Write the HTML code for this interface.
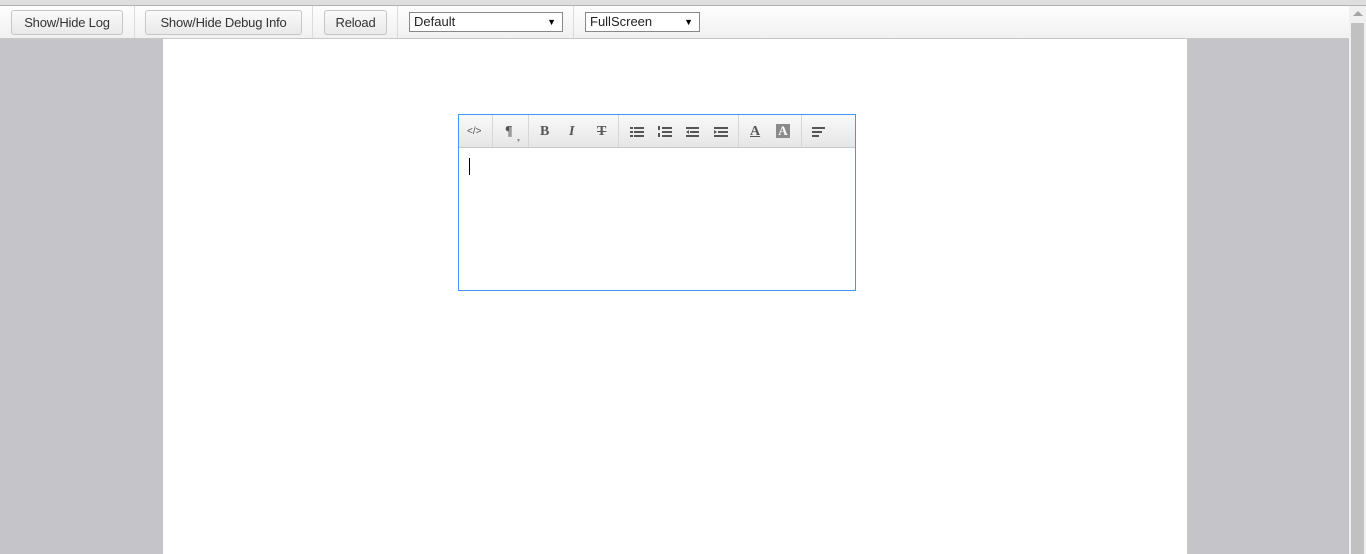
<!DOCTYPE html>
<html><head><meta charset="utf-8"><style>
*{margin:0;padding:0;box-sizing:border-box}
body{width:1366px;height:554px;overflow:hidden;background:#c5c4c8;position:relative;font-family:"Liberation Sans",sans-serif}
.a{position:absolute}
.top{left:0;top:0;width:1366px;height:6px;background:#dedede;border-bottom:1px solid #b0b0b0}
.tb{left:0;top:6px;width:1349px;height:33px;background:linear-gradient(#fdfdfd,#f1f1f1);border-bottom:1px solid #c8c8c8}
.btn{top:10px;height:25px;border:1px solid #c6c6c6;border-radius:3px;background:linear-gradient(#fafafa,#e9e9e9);font-size:13px;color:#333;text-align:center;line-height:23px;letter-spacing:-0.2px}
.sep{top:6px;width:1px;height:32px;background:#dcdcdc}
.sel{top:12px;height:20px;border:1px solid #888;background:#fff;font-size:13px;color:#222;line-height:18px;padding-left:4px}
.sel span{position:absolute;right:6px;top:0;font-size:9px;color:#000}
.sb{left:1349px;top:6px;width:17px;height:548px;background:#f0f0f0}
.thumb{left:1351px;top:23px;width:13px;height:531px;background:#c1c1c1}
.page{left:163px;top:39px;width:1024px;height:515px;background:#fff}
.ed{left:458px;top:114px;width:398px;height:177px;border:1px solid #3b99fc;background:#fff}
.et{left:459px;top:115px;width:396px;height:33px;background:linear-gradient(#f9f9f9,#e6e6e6);border-bottom:1px solid #c9c9c9}
.es{top:115px;width:1px;height:32px;background:#d6d6d6}
.ic{top:124px;font-family:"Liberation Serif",serif;font-weight:bold;font-size:14px;color:#555}
</style></head><body>
<div class="a top"></div>
<div class="a tb"></div>
<div class="a btn" style="left:11px;width:112px">Show/Hide Log</div>
<div class="a sep" style="left:134px"></div>
<div class="a btn" style="left:145px;width:157px">Show/Hide Debug Info</div>
<div class="a sep" style="left:312px"></div>
<div class="a btn" style="left:324px;width:63px">Reload</div>
<div class="a sep" style="left:397px"></div>
<div class="a sel" style="left:409px;width:154px">Default<span>▼</span></div>
<div class="a sep" style="left:573px"></div>
<div class="a sel" style="left:585px;width:115px">FullScreen<span>▼</span></div>
<div class="a sb"></div>
<div class="a" style="left:1353px;top:11px;width:0;height:0;border-left:5px solid transparent;border-right:5px solid transparent;border-bottom:5px solid #a3a3a3"></div>
<div class="a thumb"></div>
<div class="a page"></div>
<div class="a ed"></div>
<div class="a et"></div>
<div class="a es" style="left:492px"></div>
<div class="a es" style="left:528px"></div>
<div class="a es" style="left:618px"></div>
<div class="a es" style="left:738px"></div>
<div class="a es" style="left:801px"></div>
<div class="a" style="left:467px;top:126px;font-size:10px;color:#555">&lt;/&gt;</div>
<div class="a ic" style="left:505px">¶</div>
<div class="a" style="left:516px;top:138px;font-size:5px;color:#888">▼</div>
<div class="a ic" style="left:540px">B</div>
<div class="a ic" style="left:569px;font-style:italic">I</div>
<div class="a ic" style="left:597px;text-decoration:line-through">T</div>
<svg class="a" style="left:628px;top:126px" width="110" height="12" fill="#555">
<rect x="2" y="1" width="3" height="2"/><rect x="6" y="1" width="10" height="2"/><rect x="2" y="5" width="3" height="2"/><rect x="6" y="5" width="10" height="2"/><rect x="2" y="9" width="3" height="2"/><rect x="6" y="9" width="10" height="2"/>
<rect x="30" y="0" width="2" height="4"/><rect x="34" y="1" width="10" height="2"/><rect x="30" y="7" width="2" height="4"/><rect x="34" y="5" width="10" height="2"/><rect x="34" y="9" width="10" height="2"/>
<rect x="58" y="1" width="13" height="2"/><rect x="62" y="5" width="9" height="2"/><rect x="58" y="9" width="13" height="2"/><path d="M58 6l3-2v4z"/>
<rect x="86" y="1" width="14" height="2"/><rect x="90" y="5" width="10" height="2"/><rect x="86" y="9" width="14" height="2"/><path d="M86 4l3 2-3 2z"/>
</svg>
<div class="a ic" style="left:750px;text-decoration:underline">A</div>
<div class="a" style="left:776px;top:124px;width:14px;height:14px;background:#8a8a8a;color:#fff;font-family:'Liberation Serif',serif;font-weight:bold;font-size:13px;text-align:center;line-height:14px">A</div>
<svg class="a" style="left:812px;top:127px" width="14" height="10" fill="#555"><rect width="13" height="2"/><rect y="4" width="10" height="2"/><rect y="8" width="7" height="2"/></svg>
<div class="a" style="left:469px;top:158px;width:1px;height:17px;background:#000"></div>
</body></html>
